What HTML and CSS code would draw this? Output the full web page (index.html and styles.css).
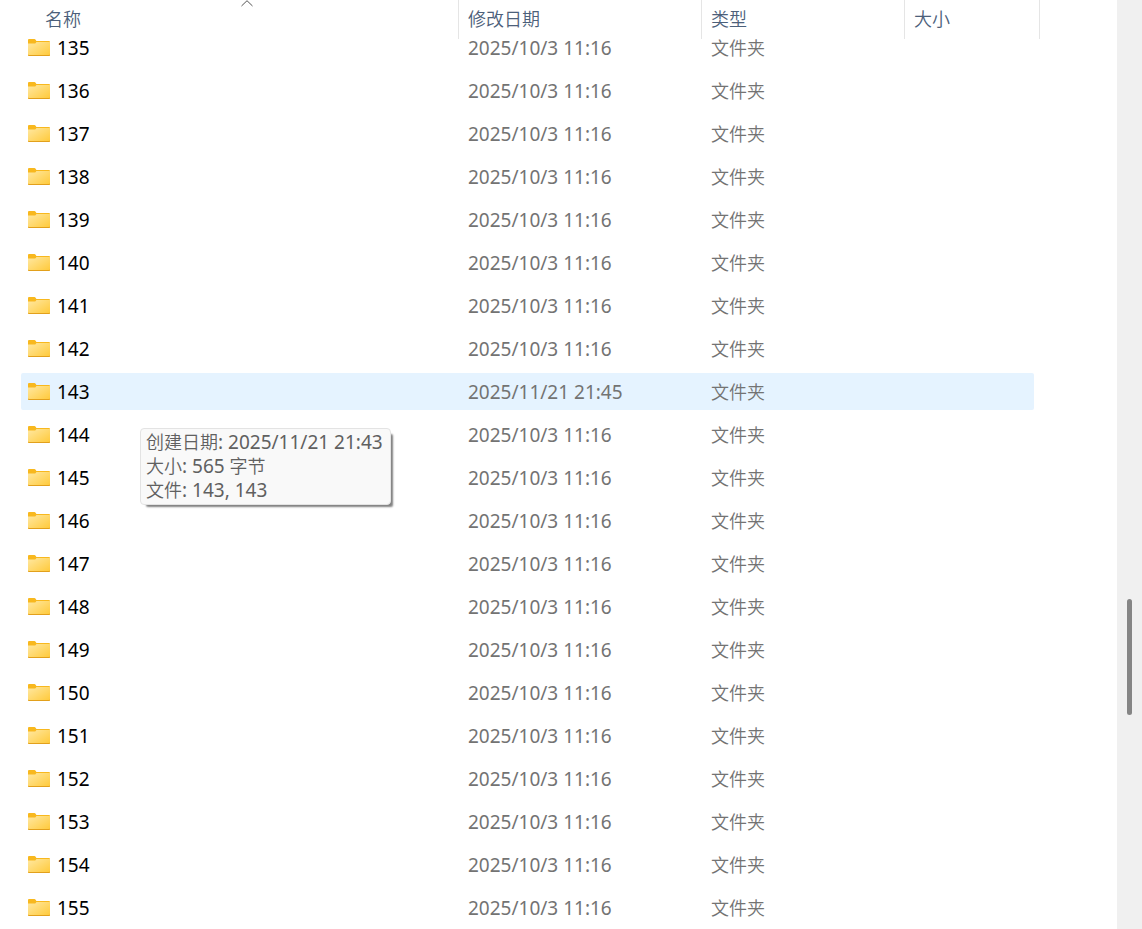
FILE: index.html
```html
<!DOCTYPE html>
<html lang="zh-CN">
<head>
    <meta charset="UTF-8">
    <meta name="viewport" content="width=device-width, initial-scale=1.0">
    <title>文件夹</title>
    <link rel="stylesheet" href="styles.css">
</head>
<body>
    <svg class="defs" width="0" height="0">
      <defs>
        <linearGradient id="folderFill" x1="0" y1="0" x2="1" y2="1">
          <stop offset="0" stop-color="#ffe8a2"/>
          <stop offset="1" stop-color="#ffc938"/>
        </linearGradient>
      </defs>
      <symbol id="folder" viewBox="0 0 22 17">
        <path d="M0 1Q0 0 1 0H6.4Q7.2 0 7.6 .7L8.4 2H21Q22 2 22 3V5H0Z" fill="#f8b81e"/>
        <path d="M0 4.5H6.6Q7.2 4.5 7.7 4L8.4 3H22V16Q22 17 21 17H1Q0 17 0 16Z" fill="url(#folderFill)"/>
        <path d="M0 15.6V16Q0 17 1 17H21Q22 17 22 16V15.6Q22 16 21 16H1Q0 16 0 15.6Z" fill="#e2a01c"/>
      </symbol>
    </svg>

    <main class="explorer">
      <table class="fileList">
        <colgroup>
          <col class="colName">
          <col class="colDate">
          <col class="colType">
          <col class="colSize">
        </colgroup>
        <thead>
          <tr>
            <th>
              <button class="sorted" type="button">名称
                <svg class="sortArrow" width="12" height="7" viewBox="0 0 12 7"><path d="M.5 6L6 .7 11.5 6" fill="none" stroke="#555" stroke-width="1"/></svg>
              </button>
            </th>
            <th><button type="button">修改日期</button></th>
            <th><button type="button">类型</button></th>
            <th><button type="button">大小</button></th>
          </tr>
        </thead>
        <tbody id="files">
          <!-- 文件夹列表 -->
        </tbody>
      </table>
    </main>

    <div class="scrollbar"><div class="thumb"></div></div>

    <div class="tooltip" role="tooltip">
      <div><span>创建日期</span>: 2025/11/21 21:43</div>
      <div><span>大小</span>: 565 <span>字节</span></div>
      <div><span>文件</span>: 143, 143</div>
    </div>

    <script>
      const files = document.getElementById('files');
      const hovered = 143;

      for (let name = 135; name <= 155; name++) {
        const row = document.createElement('tr');
        const date = name === hovered ? '2025/11/21 21:45' : '2025/10/3 11:16';
        if (name === hovered) {
          row.className = 'hovered';
        }
        row.innerHTML = `
          <td><div class="name"><svg class="icon"><use href="#folder"/></svg><span>${name}</span></div></td>
          <td>${date}</td>
          <td class="type">文件夹</td>
          <td></td>`;
        files.appendChild(row);
      }
    </script>
</body>
</html>
```
FILE: styles.css
```css
body {
  margin: 0;
  height: 100vh;
  display: flex;
  overflow: hidden;
  background: #fff;
  font-family: "Noto Sans", "Noto Sans CJK SC", sans-serif;
  font-size: 19px;
}
.defs {
  position: absolute;
}
.explorer {
  flex: 1;
  padding: 0 77px 0 21px;
  overflow: hidden;
}
.fileList {
  width: 100%;
  table-layout: fixed;
  border-spacing: 0;
}
.colDate {
  width: 243px;
}
.colType {
  width: 203px;
}
.colSize {
  width: 135px;
}
th {
  padding: 0;
  border-right: 1px solid #e5e5e5;
}
th button {
  display: block;
  width: 100%;
  height: 39px;
  padding: 0 9px 3px;
  border: 0;
  background: none;
  color: #4c607a;
  font-family: "Noto Sans CJK SC", sans-serif;
  font-size: 18px;
  font-weight: 350;
  text-align: left;
}
th .sorted {
  position: relative;
  width: auto;
  min-width: calc(100% - 15px);
  margin-left: 15px;
}
.sortArrow {
  position: absolute;
  top: 0;
  left: 50%;
  transform: translateX(-50%);
}
td {
  height: 18px;
  padding: 10px 0 9px 9px;
  border: 0 solid transparent;
  border-width: 3px 0;
  background-clip: padding-box;
  line-height: 18px;
  vertical-align: top;
  color: #737373;
}
/* first row is half scrolled under the header */
tr:first-child td {
  padding-top: 0;
  border-top: 0;
}
td:first-child {
  padding-left: 7px;
  border-radius: 2px 0 0 2px / 5px 0 0 5px;
}
td:last-child {
  border-right-width: 6px;
  border-radius: 0 8px 8px 0 / 0 5px 5px 0;
}
.hovered td {
  background-color: #e5f3ff;
}
.name {
  display: flex;
  align-items: flex-start;
  gap: 7px;
  color: #000;
}
.icon {
  width: 22px;
  height: 17px;
}
.type {
  font-family: "Noto Sans CJK SC", sans-serif;
  font-size: 18px;
  font-weight: 350;
  line-height: 16px;
}
.scrollbar {
  width: 25px;
  display: grid;
  grid-template-rows: 599fr 116fr 214fr;
  justify-content: center;
  background: #f0f0f0;
}
.thumb {
  grid-row: 2;
  width: 5px;
  border-radius: 3px;
  background: #858585;
}
.tooltip {
  position: absolute;
  top: 428px;
  left: 140px;
  padding: 1px 7px 2px 5px;
  border: 1px solid #e3e3e3;
  border-radius: 4px;
  background: #f9f9f9;
  box-shadow: 4px 4px 2px -2px #808080;
  line-height: 24px;
  color: #606060;
}
.tooltip span {
  font-family: "Noto Sans CJK SC", sans-serif;
  font-size: 18px;
  font-weight: 350;
  line-height: 18px;
}
```
